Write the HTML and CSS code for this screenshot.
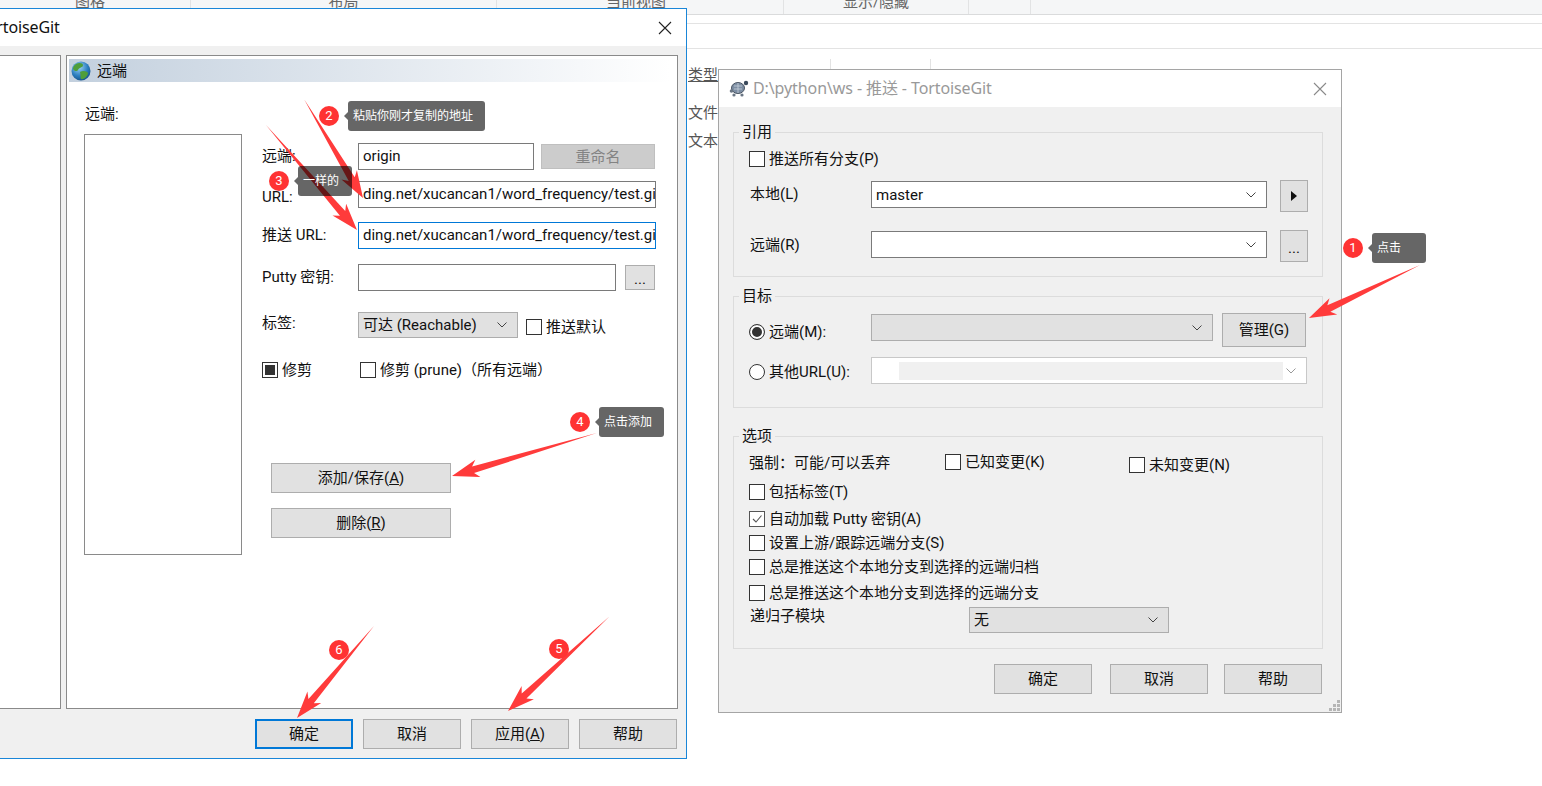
FILE: index.html

```html
<!DOCTYPE html>
<html lang="zh-CN">
<head>
  <meta charset="UTF-8" />
  <title>TortoiseGit 推送</title>
  <link rel="stylesheet" href="styles.css">
</head>
<body>

<svg class="defs" width="0" height="0">
  <symbol id="chev" viewBox="0 0 12 8"><path d="M1.5 1.5 L6 6 L10.5 1.5" fill="none" stroke="currentColor" stroke-width="1"/></symbol>
</svg>

<!-- 背景里的资源管理器 -->
<div class="ribbon">
  <div class="rib r1"><span>图格</span></div>
  <div class="rib r2"><span>布局</span></div>
  <div class="rib r3"><span>当前视图</span></div>
  <div class="rib r4"><span>显示/隐藏</span></div>
  <div class="rib r5"></div>
  <div class="rib r6"></div>
</div>
<div class="hline first"></div>
<div class="hline second"></div>
<div class="heads"><i></i><i></i></div>
<div class="files">
  <div class="file head">类型</div>
  <div class="file f1">文件</div>
  <div class="file f2">文本</div>
</div>

<!-- 左边: 设置窗口 -->
<div class="win win-left">
  <div class="titlebar">
    <span class="title-dark">TortoiseGit</span>
    <svg class="close" width="14" height="14" viewBox="0 0 14 14"><path d="M1 1 L13 13 M13 1 L1 13" stroke="#222" stroke-width="1.1"/></svg>
  </div>
  <div class="win-body">
    <div class="panels">
      <div class="panel tree"></div>
      <div class="panel main">
        <div class="banner">
          <svg class="globe" width="20" height="20" viewBox="0 0 20 20">
            <defs><radialGradient id="sea" cx="40%" cy="30%" r="75%"><stop offset="0" stop-color="#9fd4f2"/><stop offset=".6" stop-color="#2c7fc0"/><stop offset="1" stop-color="#134f86"/></radialGradient></defs>
            <circle cx="10" cy="10" r="9.5" fill="url(#sea)"/>
            <path d="M5 3 C8 1 12 2 12 4 C12 7 8 6 7 9 C6 11 3 10 2 8 C2 6 3 4 5 3Z M9 11 C12 9 16 10 17 12 C17 15 13 19 10 18 C9 16 10 14 9 11Z" fill="#4f9e3a"/>
          </svg>
          <span>远端</span>
        </div>
        <div class="main-cols">
          <div class="remote-list">
            <div class="lbl-list">远端:</div>
            <div class="listbox"></div>
          </div>
          <div class="form">
            <div class="frow fr1">
              <div class="lbl">远端:</div>
              <div class="input w176">origin</div>
              <div class="btn rename">重命名</div>
            </div>
            <div class="frow fr2">
              <div class="lbl lbl-url">URL:</div>
              <div class="input w298">ding.net/xucancan1/word_frequency/test.git</div>
            </div>
            <div class="frow fr3">
              <div class="lbl">推送 URL:</div>
              <div class="input w298 focus">ding.net/xucancan1/word_frequency/test.git</div>
            </div>
            <div class="frow fr4">
              <div class="lbl">Putty 密钥:</div>
              <div class="input w258"></div>
              <div class="btn dots">...</div>
            </div>
            <div class="frow fr5">
              <div class="lbl lbl-tag">标签:</div>
              <div class="combo off w160"><span>可达 (Reachable)</span><svg class="chev"><use href="#chev"/></svg></div>
              <label class="check push-default"><i class="box"></i>推送默认</label>
            </div>
            <div class="frow fr6">
              <label class="check prune"><i class="box mixed"></i>修剪</label>
              <label class="check"><i class="box"></i>修剪 (prune)（所有远端）</label>
            </div>
            <div class="btn wide add">添加/保存(<u>A</u>)</div>
            <div class="btn wide del">删除(<u>R</u>)</div>
          </div>
        </div>
      </div>
    </div>
    <div class="footer">
      <div class="btn foot default">确定</div>
      <div class="btn foot">取消</div>
      <div class="btn foot">应用(<u>A</u>)</div>
      <div class="btn foot">帮助</div>
    </div>
  </div>
</div>

<!-- 右边: 推送窗口 -->
<div class="win win-right">
  <div class="titlebar">
    <svg class="turtle" width="20" height="18" viewBox="0 0 20 18">
      <ellipse cx="9" cy="9" rx="6.5" ry="5.5" fill="#7d8ea3" stroke="#4a5563"/>
      <path d="M5 7 H13 M5 10 H13 M9 4 V14" stroke="#c7d0da" stroke-width=".8"/>
      <circle cx="17" cy="4" r="2.2" fill="#3b4a5c"/>
      <circle cx="2.5" cy="12" r="1.8" fill="#6a7684"/>
      <circle cx="5" cy="16" r="1.6" fill="#6a7684"/>
      <circle cx="13" cy="16" r="1.6" fill="#6a7684"/>
    </svg>
    <span class="title-grey">D:\python\ws - 推送 - TortoiseGit</span>
    <svg class="close" width="14" height="14" viewBox="0 0 14 14"><path d="M1 1 L13 13 M13 1 L1 13" stroke="#8a8a8a" stroke-width="1.1"/></svg>
  </div>
  <div class="push-body">
    <fieldset class="group g1">
      <legend>引用</legend>
      <label class="check all"><i class="box"></i>推送所有分支(P)</label>
      <div class="grow local">
        <div class="glbl">本地(L)</div>
        <div class="combo white w396"><span>master</span><svg class="chev"><use href="#chev"/></svg></div>
        <div class="btn side"><i class="tri"></i></div>
      </div>
      <div class="grow remote">
        <div class="glbl">远端(R)</div>
        <div class="combo white w396"><span></span><svg class="chev"><use href="#chev"/></svg></div>
        <div class="btn side dots-side">...</div>
      </div>
    </fieldset>

    <fieldset class="group g2">
      <legend>目标</legend>
      <div class="trow t1">
        <label class="check radio-l"><i class="radio on"></i>远端(M):</label>
        <div class="combo off w342"><span></span><svg class="chev"><use href="#chev"/></svg></div>
        <div class="btn manage">管理(G)</div>
      </div>
      <div class="trow t2">
        <label class="check radio-l"><i class="radio"></i>其他URL(U):</label>
        <div class="combo dim w436"><b class="blur"></b><svg class="chev"><use href="#chev"/></svg></div>
      </div>
    </fieldset>

    <fieldset class="group g3">
      <legend>选项</legend>
      <div class="orow o1">
        <div class="force">强制：可能/可以丢弃</div>
        <label class="check known"><i class="box"></i>已知变更(K)</label>
        <label class="check unknown"><i class="box"></i>未知变更(N)</label>
      </div>
      <label class="check opt o2"><i class="box"></i>包括标签(T)</label>
      <label class="check opt o3"><i class="box checked"><svg width="12" height="12" viewBox="0 0 12 12"><path d="M2 6 L5 9 L10.5 2.5" fill="none" stroke="#555" stroke-width="1.1"/></svg></i>自动加载 Putty 密钥(A)</label>
      <label class="check opt o4"><i class="box"></i>设置上游/跟踪远端分支(S)</label>
      <label class="check opt o5"><i class="box"></i>总是推送这个本地分支到选择的远端归档</label>
      <label class="check opt o6"><i class="box"></i>总是推送这个本地分支到选择的远端分支</label>
      <div class="orow o7">
        <div class="sub">递归子模块</div>
        <div class="combo off w200"><span>无</span><svg class="chev"><use href="#chev"/></svg></div>
      </div>
    </fieldset>

    <div class="push-foot">
      <div class="btn foot">确定</div>
      <div class="btn foot">取消</div>
      <div class="btn foot">帮助</div>
    </div>
  </div>
  <svg class="grip" width="12" height="12" viewBox="0 0 12 12"><path d="M8 0h3v3H8z M4 4h3v3H4z M8 4h3v3H8z M0 8h3v3H0z M4 8h3v3H4z M8 8h3v3H8z" fill="#b5b5b5"/></svg>
</div>

<!-- 截图上的标注 -->
<svg class="arrows" width="1542" height="786" viewBox="0 0 1542 786">
  <g fill="#ff3b3b">
    <polygon transform="translate(363 198) rotate(59.2)" points="-115,0 -22,-3.5 -27,-9 0,0 -27,9 -22,3.5"/>
    <polygon transform="translate(357 230) rotate(49.1)" points="-139,0 -22,-3.5 -27,-9 0,0 -27,9 -22,3.5"/>
    <polygon transform="translate(452 476) rotate(163.5)" points="-151,0 -22,-3.5 -27,-9 0,0 -27,9 -22,3.5"/>
    <polygon transform="translate(1309 318) rotate(154.5)" points="-123,0 -22,-3.5 -27,-9 0,0 -27,9 -22,3.5"/>
    <polygon transform="translate(297 718) rotate(129.9)" points="-120,0 -22,-3.5 -27,-9 0,0 -27,9 -22,3.5"/>
    <polygon transform="translate(508 711) rotate(137)" points="-139,0 -22,-3.5 -27,-9 0,0 -27,9 -22,3.5"/>
  </g>
</svg>

<div class="note n1"><b class="badge">1</b><span class="tip t-click">点击</span></div>
<div class="note n2"><b class="badge">2</b><span class="tip">粘贴你刚才复制的地址</span></div>
<div class="note n3"><b class="badge">3</b><span class="tip t-same">一样的</span></div>
<div class="note n4"><b class="badge">4</b><span class="tip">点击添加</span></div>
<div class="note n5"><b class="badge">5</b></div>
<div class="note n6"><b class="badge">6</b></div>

</body>
</html>
```

FILE: styles.css

```css
html, body { margin: 0; height: 100%; overflow: hidden; }
body { background: #fff; color: #111; font: 15px/20px Roboto, "Noto Sans CJK SC", sans-serif; }
.defs { position: absolute; }
i, b { font-style: normal; font-weight: normal; }

/* background window */
.ribbon { display: flex; height: 14px; background: #f5f6f7; border-bottom: 1px solid #dadbdc; overflow: hidden; color: #666; font-size: 15px; line-height: 14px; text-align: center; }
.rib { box-sizing: border-box; border-right: 1px solid #e2e3e4; }
.rib span { display: block; margin-top: -5px; }
.r1 { width: 191px; padding-right: 10px; }
.r2 { width: 306px; }
.r3 { width: 287px; padding-right: 8px; }
.r4 { width: 185px; }
.r5 { width: 62px; }
.r6 { width: 0; flex: 1; border-right: 0; }
.hline { height: 1px; background: #e3e3e3; }
.hline.first { margin-top: 8px; }
.hline.second { margin-top: 24px; }
.heads { display: flex; height: 10px; margin: 10px 0 0 830px; gap: 99px; }
.heads i { width: 1px; background: #e3e3e3; }
.files { width: 30px; margin: -4px 0 0 688px; overflow: hidden; color: #555; }
.file { white-space: nowrap; height: 20px; }
.file.head { border-bottom: 1px solid #555; height: 15px; line-height: 18px; margin-top: 1px; }
.file.f1 { margin-top: 21px; }
.file.f2 { margin-top: 8px; }

/* dialogs */
.win { position: absolute; box-sizing: border-box; display: flex; flex-direction: column; background: #fff; }
.win-left { left: -60px; top: 8px; width: 747px; height: 751px; border: 1px solid #1a86d8; }
.win-right { left: 718px; top: 69px; width: 624px; height: 644px; border: 1px solid #a5a5a5; }
.titlebar { box-sizing: border-box; display: flex; align-items: center; height: 37px; padding-bottom: 2px; flex: none; font: 16px/20px "Noto Sans", "Noto Sans CJK SC", sans-serif; letter-spacing: -.1px; position: relative; }
.title-dark { margin-left: 38px; color: #111; }
.title-grey { margin-left: 4px; color: #999; }
.turtle { margin-left: 10px; }
.close { position: absolute; right: 14px; top: 12px; }

.win-body { flex: 1; background: #f0f0f0; padding: 9px 7px 0 0; }
.panels { display: flex; gap: 5px; height: 654px; }
.panel { box-sizing: border-box; background: #fff; border: 1px solid #8a8a8a; }
.tree { width: 120px; border-left: 0; }
.main { width: 612px; padding: 3px 2px 0; }
.banner { display: flex; align-items: center; gap: 6px; height: 23px; margin-right: 5px; padding-left: 2px; background: linear-gradient(90deg, #c3d0de, #fff); }
.globe { flex: none; }
.main-cols { display: flex; padding-left: 15px; }
.remote-list { width: 158px; margin-right: 20px; }
.lbl-list { margin: 22px 0 10px 1px; }
.listbox { box-sizing: border-box; height: 421px; border: 1px solid #8a8a8a; }

.form { padding-top: 61px; width: 398px; }
.frow { display: flex; align-items: center; }
.fr1 { height: 27px; }
.fr2 { height: 27px; margin-top: 11px; }
.fr3 { height: 27px; margin-top: 14px; }
.fr4 { height: 27px; margin-top: 15px; }
.fr5 { height: 26px; margin-top: 21px; }
.fr6 { height: 16px; margin-top: 24px; }
.lbl { width: 96px; flex: none; padding-bottom: 2px; }
.lbl-url { padding: 5px 0 0; }
.lbl-tag { padding-bottom: 4px; }

.input { box-sizing: border-box; height: 27px; line-height: 24px; padding-left: 4px; border: 1px solid #7a7a7a; background: #fff; white-space: nowrap; overflow: hidden; }
.input.focus { border-color: #0078d7; }
.w176 { width: 176px; }
.w258 { width: 258px; }
.w298 { width: 298px; }

.btn { box-sizing: border-box; display: flex; align-items: center; justify-content: center; flex: none; background: #e1e1e1; border: 1px solid #adadad; }
.rename { width: 114px; height: 25px; margin-left: 7px; background: #ccc; border-color: #bfbfbf; color: #838383; }
.dots { width: 30px; height: 25px; margin-left: 9px; padding-top: 3px; }
.wide { width: 180px; height: 30px; margin-left: 9px; }
.add { margin-top: 85px; }
.del { margin-top: 15px; }
.foot { width: 98px; height: 30px; }
.default { border: 2px solid #0078d7; }
.footer { display: flex; justify-content: flex-end; gap: 10px; margin: 10px 2px 0 0; }

.combo { box-sizing: border-box; display: flex; align-items: center; justify-content: space-between; height: 27px; padding: 0 9px 0 4px; border: 1px solid #7a7a7a; flex: none; }
.combo.white { background: #fff; }
.combo.off { background: #e1e1e1; border-color: #adadad; }
.combo.dim { background: #fff; border-color: #c8c8c8; color: #999; }
.chev { width: 12px; height: 8px; color: #444; flex: none; margin-left: auto; }
.combo.dim .chev { color: #999; }
.w160 { width: 160px; height: 26px; }
.w200 { width: 200px; height: 26px; }
.w342 { width: 342px; }
.w396 { width: 396px; }
.w436 { width: 436px; }
.blur { width: 384px; height: 18px; margin-left: 23px; background: #f0f0f0; }

.check { display: flex; align-items: center; gap: 4px; white-space: nowrap; height: 16px; }
.box { box-sizing: border-box; display: flex; align-items: center; justify-content: center; width: 16px; height: 16px; flex: none; background: #fff; border: 1px solid #333; }
.box.mixed { background: #fff; box-shadow: inset 0 0 0 2px #fff, inset 0 0 0 8px #333; }
.box.checked { border-color: #555; }
.radio { box-sizing: border-box; width: 16px; height: 16px; flex: none; background: #fff; border: 1px solid #333; border-radius: 50%; }
.radio.on { box-shadow: inset 0 0 0 2px #fff, inset 0 0 0 8px #333; }
.push-default { margin-left: 8px; margin-top: 3px; }
.prune { width: 98px; }

/* push dialog */
.push-body { flex: 1; background: #f0f0f0; padding-left: 14px; display: flex; flex-direction: column; align-items: flex-start; }
.group { box-sizing: border-box; width: 590px; margin: 0; padding: 0 0 0 15px; border: 1px solid #dcdcdc; }
.group legend { margin-left: -10px; padding: 0 3px; line-height: 20px; }
.g1 { height: 155px; margin-top: 15px; }
.g2 { height: 122px; margin-top: 9px; }
.g3 { height: 223px; margin-top: 18px; }
.all { margin-top: 9px; }
.grow { display: flex; align-items: flex-start; }
.local { margin-top: 13px; }
.remote { margin-top: 18px; }
.glbl { width: 122px; flex: none; line-height: 26px; margin: 1px -1px 0 1px; }
.remote .glbl { margin-top: 2px; }
.grow .combo { margin-top: 1px; }
.side { width: 28px; height: 32px; margin-left: 13px; }
.dots-side { padding-top: 4px; }
.tri { width: 0; height: 0; border-left: 6px solid #111; border-top: 5px solid transparent; border-bottom: 5px solid transparent; }

.trow { display: flex; align-items: flex-start; }
.radio-l { width: 122px; flex: none; }
.t1 { margin-top: 7px; }
.t1 .radio-l { margin-top: 11px; }
.t1 .combo { margin-top: 1px; }
.t2 { margin-top: 10px; }
.t2 .radio-l { margin-top: 7px; }
.manage { width: 84px; height: 34px; margin-left: 9px; }

.orow { position: relative; display: flex; }
.o1 { height: 20px; margin-top: 7px; }
.force { width: 196px; margin-left: 0; flex: none; }
.known { width: 184px; flex: none; margin-top: 1px; }
.unknown { margin-top: 4px; }
.opt { width: fit-content; }
.o2 { margin-top: 11px; }
.o3 { margin-top: 11px; }
.o4 { margin-top: 8px; }
.o5 { margin-top: 8px; }
.o6 { margin-top: 10px; }
.o7 { height: 26px; margin-top: 6px; }
.sub { width: 220px; flex: none; margin: -1px -1px 0 1px; line-height: 20px; }
.push-foot { display: flex; justify-content: flex-end; gap: 18px; width: 590px; margin-top: 15px; }
.push-foot .foot:last-child { margin-left: -2px; margin-right: 1px; }
.grip { position: absolute; right: 0; bottom: 0; }

/* annotations */
.arrows { position: absolute; left: 0; top: 0; pointer-events: none; }
.note { position: absolute; display: flex; align-items: center; gap: 9px; }
.badge { width: 20px; height: 20px; border-radius: 50%; background: #f33; color: #fff; font-size: 13px; line-height: 20px; text-align: center; flex: none; }
.tip { position: relative; height: 30px; padding: 0 12px 0 5px; border-radius: 3px; background: rgba(0, 0, 0, .6); color: #fff; font-size: 12px; line-height: 30px; white-space: nowrap; }
.tip::before { content: ""; position: absolute; left: -4px; top: 11px; border-right: 4px solid rgba(0, 0, 0, .6); border-top: 4px solid transparent; border-bottom: 4px solid transparent; }
.t-click { box-sizing: border-box; width: 54px; }
.t-same { box-sizing: border-box; width: 54px; }
.n1 { left: 1343px; top: 233px; }
.n2 { left: 319px; top: 101px; }
.n3 { left: 269px; top: 166px; }
.n4 { left: 570px; top: 407px; }
.n5 { left: 549px; top: 639px; }
.n6 { left: 329px; top: 640px; }
```
